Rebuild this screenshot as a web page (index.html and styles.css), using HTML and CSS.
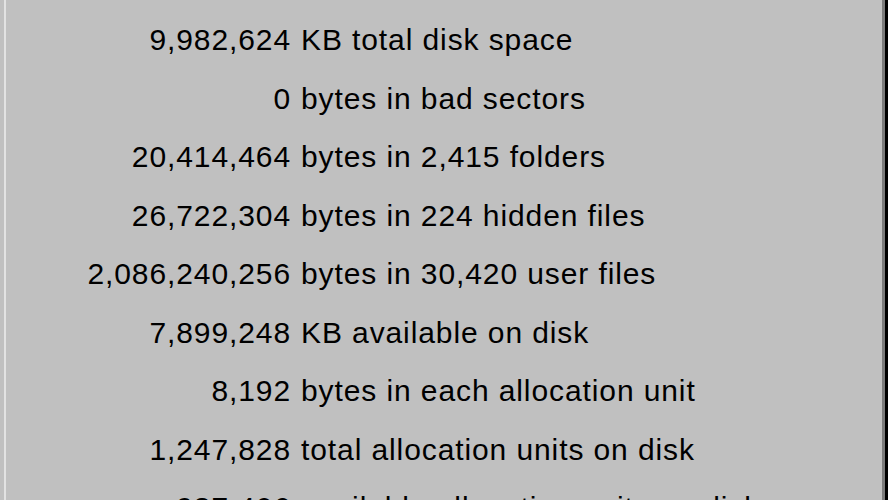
FILE: index.html
```html
<!DOCTYPE html>
<html>
<head>
<meta charset="utf-8">
<link rel="stylesheet" href="styles.css">
</head>
<body>
<div class="window">
  <div class="panel">
    <div class="report">
      <span class="num">9,982,624</span><span class="txt">KB total disk space</span>
      <span class="num">0</span><span class="txt">bytes in bad sectors</span>
      <span class="num">20,414,464</span><span class="txt">bytes in 2,415 folders</span>
      <span class="num">26,722,304</span><span class="txt">bytes in 224 hidden files</span>
      <span class="num">2,086,240,256</span><span class="txt">bytes in 30,420 user files</span>
      <span class="num">7,899,248</span><span class="txt">KB available on disk</span>
      <span class="num">8,192</span><span class="txt">bytes in each allocation unit</span>
      <span class="num">1,247,828</span><span class="txt">total allocation units on disk</span>
      <span class="num">987,406</span><span class="txt">available allocation units on disk</span>
    </div>
  </div>
</div>
</body>
</html>
```
FILE: styles.css
```css
html, body {
  margin: 0;
  padding: 0;
  width: 888px;
  height: 500px;
  overflow: hidden;
  background: #c0c0c0;
}
.window {
  height: 500px;
  box-sizing: border-box;
  padding-left: 4px;
  border-right: 3px solid #000000;
  background: #c0c0c0;
}
.panel {
  height: 100%;
  box-sizing: border-box;
  border-left: 2px solid #e2e2e2;
  border-right: 3px solid #7c7c7c;
  padding-top: 11px;
  overflow: hidden;
}
.report {
  display: grid;
  grid-template-columns: 285px auto;
  grid-auto-rows: 58.5px;
  column-gap: 10px;
  font-family: "Liberation Sans", Arial, sans-serif;
  font-size: 30px;
  letter-spacing: 0.9px;
  line-height: 58.5px;
  color: #000;
  white-space: nowrap;
}
.num {
  text-align: right;
}
```
